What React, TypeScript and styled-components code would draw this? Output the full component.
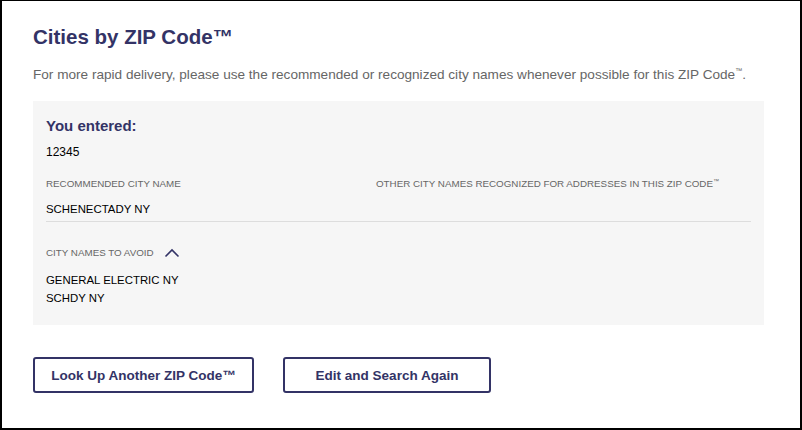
import React from "react";
import styled, { createGlobalStyle } from "styled-components";

const Global = createGlobalStyle`
  html, body { margin: 0; padding: 0; background: #fff; }
  body { font-family: "Liberation Sans", Arial, sans-serif; }
  * { box-sizing: border-box; }
`;

const Frame = styled.div`
  width: 802px;
  height: 430px;
  border-top: 1px solid #000;
  border-left: 2px solid #000;
  border-right: 2px solid #000;
  border-bottom: 2px solid #000;
  padding: 24px 36px 0 31px;
  display: flex;
  flex-direction: column;
`;

const Title = styled.h1`
  margin: 0;
  font-size: 20.5px;
  line-height: 24px;
  font-weight: 700;
  color: #333366;
`;

const Intro = styled.p`
  margin: 17px 0 0;
  font-size: 13.6px;
  line-height: 18px;
  color: #666;
  sup { font-size: 7px; line-height: 0; vertical-align: 6px; }
`;

const Panel = styled.section`
  margin-top: 17px;
  background: #f6f6f6;
  height: 224px;
  padding: 16px 13px 0 13px;
  display: flex;
  flex-direction: column;
`;

const Entered = styled.h2`
  margin: 0;
  font-size: 15px;
  line-height: 18px;
  font-weight: 700;
  color: #333366;
`;

const Value = styled.div<{ $mt?: number; $size?: number }>`
  margin-top: ${(p) => p.$mt ?? 0}px;
  font-size: ${(p) => p.$size ?? 11.4}px;
  line-height: 18px;
  color: #000;
`;

const Columns = styled.div`
  margin-top: 16px;
  display: grid;
  grid-template-columns: 330px 1fr;
  align-items: start;
  border-bottom: 1px solid #ddd;
  padding-bottom: 3px;
`;

const Label = styled.div`
  font-size: 9.8px;
  line-height: 14px;
  color: #666;
  text-transform: uppercase;
  display: flex;
  align-items: center;
  gap: 10px;
  sup { font-size: 6px; line-height: 0; vertical-align: 4px; }
`;

const AvoidBlock = styled.div`
  margin-top: 24px;
  display: flex;
  flex-direction: column;
`;

const Chevron = styled.svg`
  width: 16px;
  height: 10px;
`;

const Buttons = styled.div`
  margin-top: 32px;
  display: flex;
  gap: 29px;
`;

const Button = styled.button<{ $w: number }>`
  width: ${(p) => p.$w}px;
  height: 36px;
  background: #fff;
  border: 2px solid #333366;
  border-radius: 3px;
  font-family: "Liberation Sans", Arial, sans-serif;
  font-weight: 700;
  font-size: 13.5px;
  color: #333366;
  cursor: pointer;
  padding: 0;
`;

export default function App() {
  return (
    <>
      <Global />
      <Frame>
        <Title>Cities by ZIP Code™</Title>
        <Intro>
          For more rapid delivery, please use the recommended or recognized city names whenever possible for this ZIP Code
          <sup>™</sup>.
        </Intro>
        <Panel>
          <Entered>You entered:</Entered>
          <Value $mt={8} $size={12}>12345</Value>
          <Columns>
            <div>
              <Label>Recommended City Name</Label>
              <Value $mt={9}>SCHENECTADY NY</Value>
            </div>
            <div>
              <Label>
                <span>
                  Other City Names Recognized for Addresses in this ZIP Code<sup>™</sup>
                </span>
              </Label>
            </div>
          </Columns>
          <AvoidBlock>
            <Label>
              City Names to Avoid
              <Chevron viewBox="0 0 16 10">
                <path d="M1.5 8.5 L8 2 L14.5 8.5" fill="none" stroke="#333366" strokeWidth="1.6" />
              </Chevron>
            </Label>
            <Value $mt={11}>GENERAL ELECTRIC NY</Value>
            <Value>SCHDY NY</Value>
          </AvoidBlock>
        </Panel>
        <Buttons>
          <Button $w={221}>Look Up Another ZIP Code™</Button>
          <Button $w={208}>Edit and Search Again</Button>
        </Buttons>
      </Frame>
    </>
  );
}
